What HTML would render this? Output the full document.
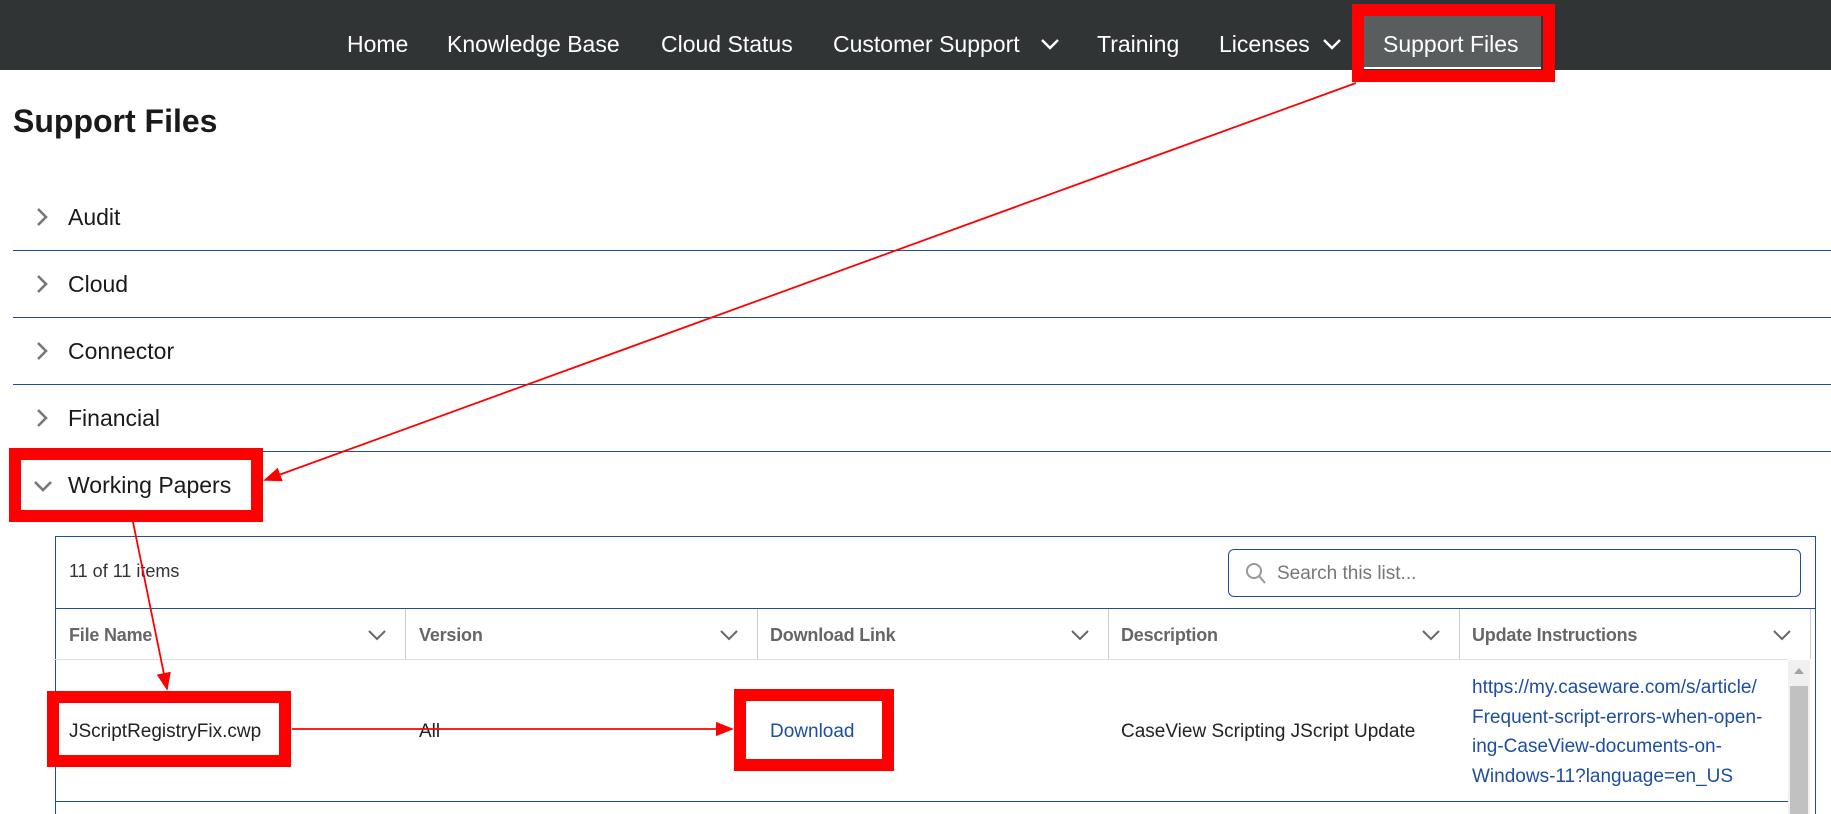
<!DOCTYPE html>
<html><head><meta charset="utf-8"><style>
*{margin:0;padding:0;box-sizing:border-box}
html{width:1831px;height:814px;overflow:hidden}
body{width:1831px;height:814px;overflow:hidden;background:#fff;font-family:"Liberation Sans",sans-serif;position:relative;color:#222}
.a{position:absolute;white-space:nowrap}
.nav{position:absolute;left:0;top:0;width:1831px;height:70px;background:#313435}
.ni{position:absolute;top:30px;color:#fff;font-size:23px;line-height:28px}
.sep{position:absolute;left:13px;width:1818px;height:1px;background:#1d4ea0}
.acc{position:absolute;left:68px;font-size:23px;line-height:28px;color:#1a1a1a}
.hd{position:absolute;top:625px;font-size:18px;font-weight:bold;color:#666;letter-spacing:-.2px}
.red{position:absolute;border:12px solid #f00}
</style></head><body>
<div class="nav">
<div class="ni" style="left:347px">Home</div>
<div class="ni" style="left:447px">Knowledge Base</div>
<div class="ni" style="left:661px">Cloud Status</div>
<div class="ni" style="left:833px">Customer Support</div>
<svg class="a" style="left:1040px;top:37px" width="20" height="14"><path d="M2 3l8 8 8-8" stroke="#fff" stroke-width="2.4" fill="none"/></svg>
<div class="ni" style="left:1097px">Training</div>
<div class="ni" style="left:1219px">Licenses</div>
<svg class="a" style="left:1322px;top:37px" width="20" height="14"><path d="M2 3l8 8 8-8" stroke="#fff" stroke-width="2.4" fill="none"/></svg>
<div class="a" style="left:1363px;top:14px;width:178px;height:55px;background:#5a5d5e;border-bottom:2px solid #fff"></div>
<div class="ni" style="left:1383px">Support Files</div>
</div>
<div class="red" style="left:1352px;top:4px;width:203px;height:78px"></div>
<div class="a" style="left:13px;top:103px;font-size:32px;font-weight:bold;color:#1a1a1a">Support Files</div>

<svg class="a" style="left:34px;top:206px" width="16" height="22"><path d="M4 3l8 8-8 8" stroke="#777" stroke-width="2.6" fill="none"/></svg>
<div class="acc" style="top:203px">Audit</div>
<div class="sep" style="top:250px"></div>
<svg class="a" style="left:34px;top:273px" width="16" height="22"><path d="M4 3l8 8-8 8" stroke="#777" stroke-width="2.6" fill="none"/></svg>
<div class="acc" style="top:270px">Cloud</div>
<div class="sep" style="top:317px"></div>
<svg class="a" style="left:34px;top:340px" width="16" height="22"><path d="M4 3l8 8-8 8" stroke="#777" stroke-width="2.6" fill="none"/></svg>
<div class="acc" style="top:337px">Connector</div>
<div class="sep" style="top:384px"></div>
<svg class="a" style="left:34px;top:407px" width="16" height="22"><path d="M4 3l8 8-8 8" stroke="#777" stroke-width="2.6" fill="none"/></svg>
<div class="acc" style="top:404px">Financial</div>
<div class="sep" style="top:451px"></div>
<svg class="a" style="left:32px;top:478px" width="22" height="16"><path d="M3 4l8 8 8-8" stroke="#777" stroke-width="2.6" fill="none"/></svg>
<div class="acc" style="top:471px">Working Papers</div>
<div class="red" style="left:9px;top:448px;width:254px;height:74px"></div>

<div class="a" style="left:55px;top:536px;width:1761px;height:278px;border:1px solid #1d4ea0;border-bottom:none"></div>
<div class="a" style="left:69px;top:561px;font-size:18px;color:#333">11 of 11 items</div>
<div class="a" style="left:1228px;top:549px;width:573px;height:48px;border:1px solid #1d4ea0;border-radius:6px"></div>
<svg class="a" style="left:1245px;top:562px" width="22" height="24"><circle cx="9" cy="9" r="7" stroke="#999" stroke-width="2" fill="none"/><path d="M14 14l6 7" stroke="#999" stroke-width="2"/></svg>
<div class="a" style="left:1277px;top:563px;font-size:19px;color:#777">Search this list...</div>
<div class="a" style="left:55px;top:608px;width:1761px;height:1px;background:#1d4ea0"></div>
<div class="a" style="left:55px;top:659px;width:1733px;height:1px;background:#ddd"></div>
<div class="a" style="left:405px;top:609px;width:1px;height:50px;background:#ccc"></div>
<div class="a" style="left:757px;top:609px;width:1px;height:50px;background:#ccc"></div>
<div class="a" style="left:1108px;top:609px;width:1px;height:50px;background:#ccc"></div>
<div class="a" style="left:1459px;top:609px;width:1px;height:50px;background:#ccc"></div>
<div class="a" style="left:1810px;top:609px;width:1px;height:50px;background:#ccc"></div>
<div class="hd" style="left:69px">File Name</div>
<div class="hd" style="left:419px">Version</div>
<div class="hd" style="left:770px">Download Link</div>
<div class="hd" style="left:1121px">Description</div>
<div class="hd" style="left:1472px">Update Instructions</div>
<svg class="a" style="left:367px;top:628px" width="20" height="14"><path d="M2 3l8 8 8-8" stroke="#666" stroke-width="2" fill="none"/></svg>
<svg class="a" style="left:719px;top:628px" width="20" height="14"><path d="M2 3l8 8 8-8" stroke="#666" stroke-width="2" fill="none"/></svg>
<svg class="a" style="left:1070px;top:628px" width="20" height="14"><path d="M2 3l8 8 8-8" stroke="#666" stroke-width="2" fill="none"/></svg>
<svg class="a" style="left:1421px;top:628px" width="20" height="14"><path d="M2 3l8 8 8-8" stroke="#666" stroke-width="2" fill="none"/></svg>
<svg class="a" style="left:1772px;top:628px" width="20" height="14"><path d="M2 3l8 8 8-8" stroke="#666" stroke-width="2" fill="none"/></svg>

<div class="a" style="left:69px;top:721px;font-size:19px;color:#222">JScriptRegistryFix.cwp</div>
<div class="a" style="left:419px;top:721px;font-size:19px;color:#222">All</div>
<div class="a" style="left:770px;top:721px;font-size:19px;color:#1d4ea0">Download</div>
<div class="a" style="left:1121px;top:721px;font-size:19px;color:#222">CaseView Scripting JScript Update</div>
<div class="a" style="left:1472px;top:673px;font-size:19px;line-height:29.5px;color:#1d4ea0">https://my.caseware.com/s/article/<br>Frequent-script-errors-when-open-<br>ing-CaseView-documents-on-<br>Windows-11?language=en_US</div>
<div class="a" style="left:55px;top:801px;width:1733px;height:1px;background:#1d4ea0"></div>
<div class="a" style="left:1788px;top:660px;width:22px;height:154px;background:#f0f0f0"></div>
<div class="a" style="left:1790px;top:686px;width:18px;height:128px;background:#c1c1c1"></div>
<svg class="a" style="left:1793px;top:667px" width="12" height="8"><path d="M1 7l5-6 5 6z" fill="#a3a3a3"/></svg>

<div class="red" style="left:47px;top:691px;width:244px;height:76px"></div>
<div class="red" style="left:734px;top:689px;width:160px;height:82px"></div>

<svg class="a" style="left:0;top:0" width="1831" height="814">
<defs><marker id="m" markerWidth="10" markerHeight="8" refX="9" refY="4" orient="auto"><path d="M0 0L10 4L0 8z" fill="#f00"/></marker></defs>
<g stroke="#f00" stroke-width="1.8" fill="none" marker-end="url(#m)">
<line x1="1356" y1="83" x2="265" y2="480"/>
<line x1="133" y1="522" x2="167" y2="689"/>
<line x1="292" y1="729" x2="732" y2="729"/>
</g></svg>
</body></html>
